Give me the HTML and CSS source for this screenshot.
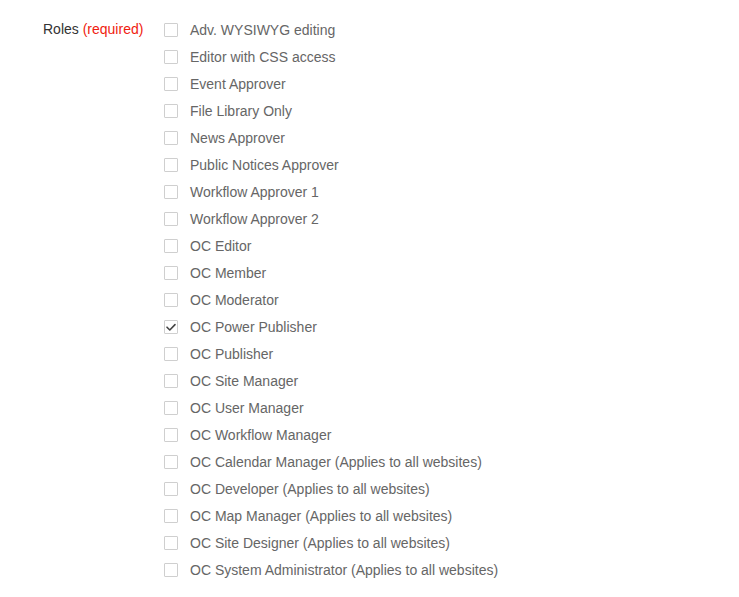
FILE: index.html
```html
<!DOCTYPE html>
<html>
<head>
<meta charset="utf-8">
<link rel="stylesheet" href="styles.css">
</head>
<body>
<div class="field">
  <div class="label">Roles <span class="req">(required)</span></div>
  <ul class="options">
    <li><span class="box"></span><span class="text">Adv. WYSIWYG editing</span></li>
    <li><span class="box"></span><span class="text">Editor with CSS access</span></li>
    <li><span class="box"></span><span class="text">Event Approver</span></li>
    <li><span class="box"></span><span class="text">File Library Only</span></li>
    <li><span class="box"></span><span class="text">News Approver</span></li>
    <li><span class="box"></span><span class="text">Public Notices Approver</span></li>
    <li><span class="box"></span><span class="text">Workflow Approver 1</span></li>
    <li><span class="box"></span><span class="text">Workflow Approver 2</span></li>
    <li><span class="box"></span><span class="text">OC Editor</span></li>
    <li><span class="box"></span><span class="text">OC Member</span></li>
    <li><span class="box"></span><span class="text">OC Moderator</span></li>
    <li><span class="box checked"><svg viewBox="0 0 14 14" width="14" height="14"><path d="M3 7.2 L5.8 10 L11 4.6" fill="none" stroke="#444" stroke-width="1.6" stroke-linecap="round" stroke-linejoin="round"/></svg></span><span class="text">OC Power Publisher</span></li>
    <li><span class="box"></span><span class="text">OC Publisher</span></li>
    <li><span class="box"></span><span class="text">OC Site Manager</span></li>
    <li><span class="box"></span><span class="text">OC User Manager</span></li>
    <li><span class="box"></span><span class="text">OC Workflow Manager</span></li>
    <li><span class="box"></span><span class="text">OC Calendar Manager (Applies to all websites)</span></li>
    <li><span class="box"></span><span class="text">OC Developer (Applies to all websites)</span></li>
    <li><span class="box"></span><span class="text">OC Map Manager (Applies to all websites)</span></li>
    <li><span class="box"></span><span class="text">OC Site Designer (Applies to all websites)</span></li>
    <li><span class="box"></span><span class="text">OC System Administrator (Applies to all websites)</span></li>
  </ul>
</div>
</body>
</html>
```
FILE: styles.css
```css
html, body {
  margin: 0;
  padding: 0;
  background: #fff;
}
body {
  font-family: "Liberation Sans", Arial, sans-serif;
  font-size: 14px;
}
.field {
  display: flex;
  padding: 16px 0 0 43px;
}
.label {
  width: 121px;
  color: #333;
  line-height: 27px;
  height: 27px;
  white-space: nowrap;
}
.req {
  color: #f01c10;
}
.options {
  list-style: none;
  margin: 0;
  padding: 0;
}
.options li {
  display: flex;
  align-items: center;
  height: 27px;
}
.box {
  box-sizing: border-box;
  width: 14px;
  height: 14px;
  border: 1px solid #cfcfcf;
  border-radius: 1px;
  margin-right: 12px;
  position: relative;
  flex: none;
}
.box svg {
  position: absolute;
  left: -1px;
  top: -1px;
}
.text {
  color: #666;
}
```
